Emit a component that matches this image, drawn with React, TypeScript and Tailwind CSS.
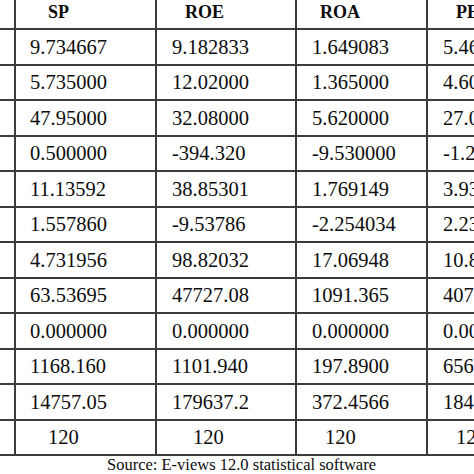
import React from "react";

const rows: string[][] = [
  ["9.734667", "9.182833", "1.649083", "5.462817"],
  ["5.735000", "12.02000", "1.365000", "4.600000"],
  ["47.95000", "32.08000", "5.620000", "27.03000"],
  ["0.500000", "-394.320", "-9.530000", "-1.230000"],
  ["11.13592", "38.85301", "1.769149", "3.931854"],
  ["1.557860", "-9.53786", "-2.254034", "2.237451"],
  ["4.731956", "98.82032", "17.06948", "10.85620"],
  ["63.53695", "47727.08", "1091.365", "407.5093"],
  ["0.000000", "0.000000", "0.000000", "0.000000"],
  ["1168.160", "1101.940", "197.8900", "656.0142"],
  ["14757.05", "179637.2", "372.4566", "184.3569"],
];

const padBody = ["pl-[14px]", "pl-[15px]", "pl-[15px]", "pl-[15px]"];
const padHead = ["pl-[32px]", "pl-[28px]", "pl-[23px]", "pl-[28px]"];
const padLast = ["pl-[32px]", "pl-[36px]", "pl-[28px]", "pl-[28px]"];
const heads = ["SP", "ROE", "ROA", "PE"];

export default function App() {
  return (
    <div
      className="w-[474px] h-[474px] overflow-hidden bg-white text-[#0d0d0d]"
      style={{ fontFamily: '"Liberation Serif", "Times New Roman", serif' }}
    >
      <div className="grid grid-cols-[14px_139px_138px_129px_1fr] gap-[2px] bg-[#3c3c3c] border-b-2 border-[#3c3c3c]">
        <div className="bg-white h-[28px]" />
        {heads.map((h, i) => (
          <div
            key={h}
            className={`bg-white h-[28px] pt-[3px] leading-none text-[18px] font-bold whitespace-nowrap overflow-hidden ${padHead[i]}`}
          >
            {h}
          </div>
        ))}
        {rows.map((r, ri) => (
          <React.Fragment key={ri}>
            <div className="bg-white h-[33.5px]" />
            {r.map((v, ci) => (
              <div
                key={ci}
                className={`bg-white h-[33.5px] flex items-center leading-none text-[20.5px] whitespace-nowrap overflow-hidden ${padBody[ci]}`}
              >
                {v}
              </div>
            ))}
          </React.Fragment>
        ))}
        <div className="bg-white h-[33.5px]" />
        {["120", "120", "120", "120"].map((v, ci) => (
          <div
            key={ci}
            className={`bg-white h-[33.5px] flex items-center leading-none text-[20.5px] whitespace-nowrap overflow-hidden ${padLast[ci]}`}
          >
            {v}
          </div>
        ))}
      </div>
      <div className="pl-[107px] text-[16.5px] leading-[18px] whitespace-nowrap">
        Source: E-views 12.0 statistical software
      </div>
    </div>
  );
}
